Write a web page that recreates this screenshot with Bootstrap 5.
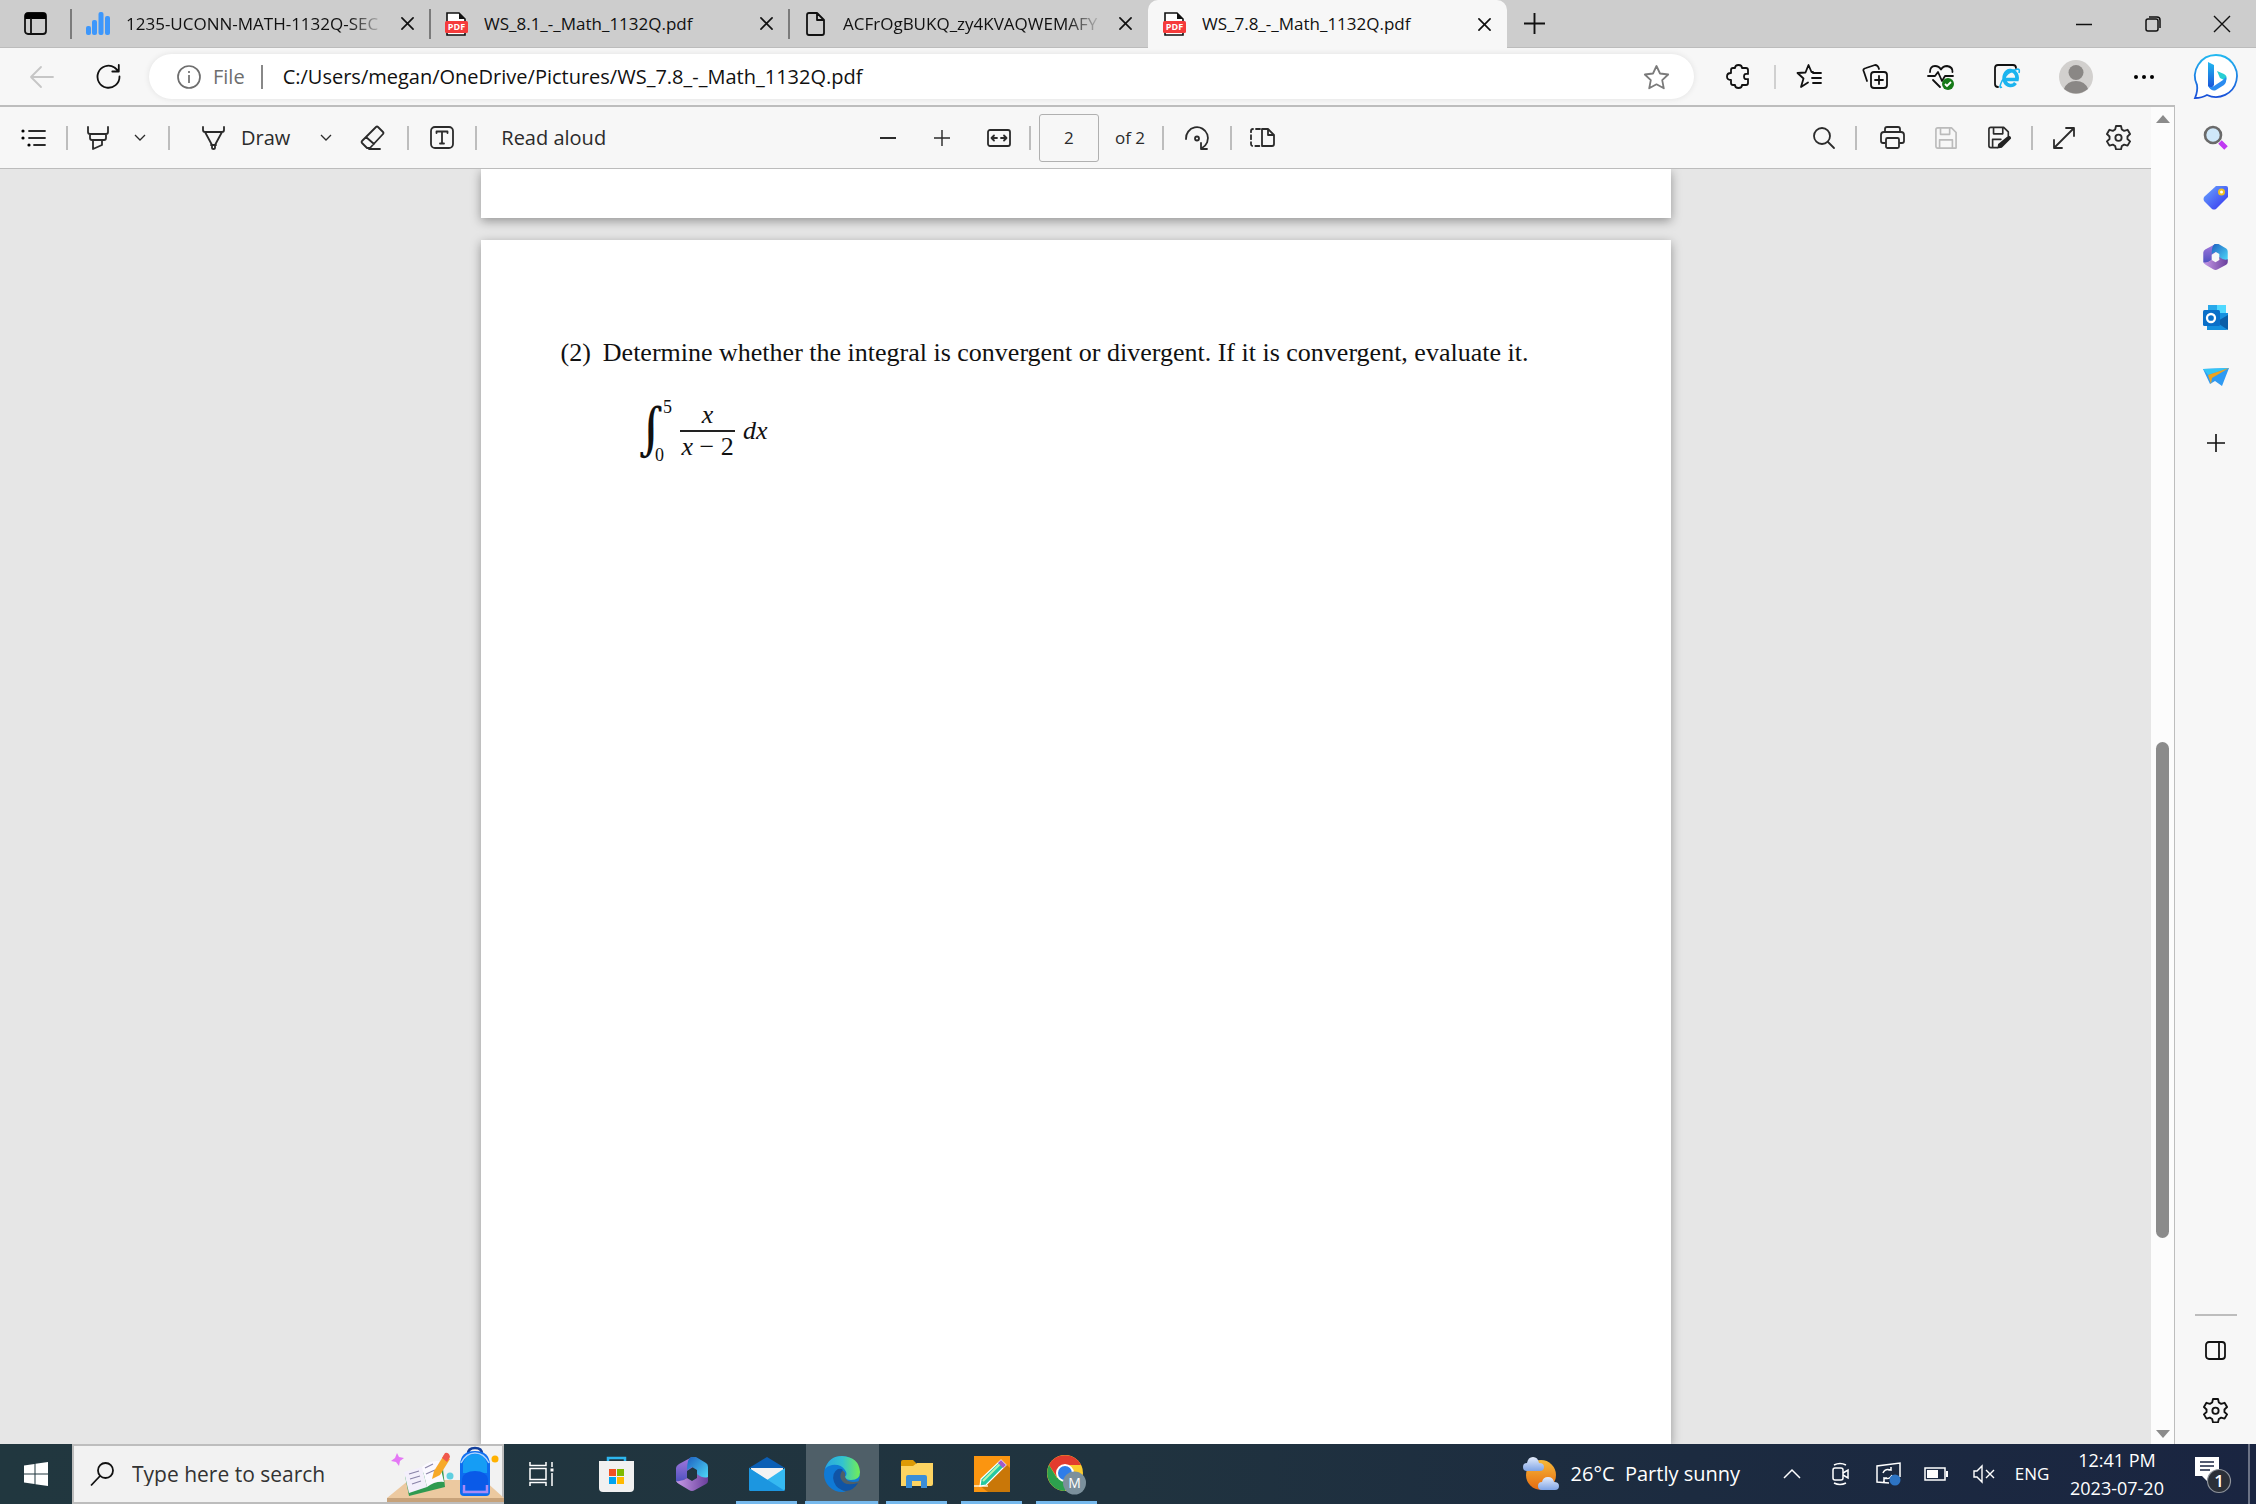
<!DOCTYPE html>
<html lang="en">
<head>
<meta charset="utf-8">
<meta name="viewport" content="width=device-width, initial-scale=1">
<title>WS_7.8_-_Math_1132Q.pdf</title>
<link rel="stylesheet" href="https://cdn.jsdelivr.net/npm/bootstrap@5.3.0/dist/css/bootstrap.min.css">
<script src="https://cdn.jsdelivr.net/npm/bootstrap@5.3.0/dist/js/bootstrap.bundle.min.js"></script>
<style>
body{font-family:"Open Sans","Noto Sans",sans-serif;font-size:17px;line-height:24px;color:#111;background:#f7f7f7}
svg{display:block;flex:none;overflow:visible}
.ln{fill:none;stroke:currentColor;stroke-width:1.8;stroke-linecap:round;stroke-linejoin:round}
.ib{border:0;background:none;padding:0;color:inherit;display:flex;align-items:center;justify-content:center;flex:none;align-self:stretch}
.w24{width:24px}.w54{width:54px}.w60{width:60px}.w63{width:63px}.w66{width:66px}.w69{width:69px}.w72{width:72px}.w75{width:75px}
.min-0{min-width:0;min-height:0}
.vbar{width:2px;height:24px;background:#bdbdbd;flex:none}
/* tab strip */
.tabstrip{height:48px;background:#cdcdcd;border-bottom:1px solid #bcbcbc}
.lead-btn{width:71px}
.tabitem{width:359px;padding:0 16px;gap:16px;min-width:0}
.tabitem+.tabitem::before,.tabitem.first::before{content:"";width:2px;height:30px;background:#7b7b7b;margin:0 -2px 0 -17px;flex:none}
.tabitem.active{background:#f7f7f7;border-radius:10px 10px 0 0;margin-bottom:-1px}
.tabitem.active::before{visibility:hidden}
.tabname{color:#111;text-decoration:none;white-space:nowrap;overflow:hidden;flex:1 1 0}
.fade-end{-webkit-mask-image:linear-gradient(90deg,#000 86%,transparent);mask-image:linear-gradient(90deg,#000 86%,transparent)}
/* address row */
.addr{height:57px}
.omni{height:45px;border-radius:23px;background:#fff;box-shadow:0 0 6px rgba(0,0,0,.09);padding:0 24px 0 28px;font-size:20px}
.omni label{color:#6e6e6e}
.omni input{border:0;outline:0;background:none;color:#111;padding:0}
/* viewer */
.viewer{border-top:2px solid #bdbdbd;border-right:1px solid #bdbdbd;min-height:0}
.pdfbar{height:62px;border-bottom:1px solid #bcbcbc;color:#2b2b2b;font-size:20px}
.third{flex:1 1 0}
.tools-mid{padding-left:8px}
.tools-end{padding-right:6px}
.pageno{width:60px;height:48px;border:1px solid #b0b0b0;border-radius:3px;background:none;text-align:center;font-size:17px;color:#2b2b2b;padding:0}
.pagecount{font-size:17px;padding:0 17px 0 16px}
.canvas{background:#e6e6e6;min-height:0;gap:22px}
.sheet{width:1190px;max-width:100%;background:#fff;box-shadow:0 3px 10px rgba(0,0,0,.36);flex:none}
.sheet.prev{height:49px}
.sheet.cur{flex:1 0 0;padding:97px 80px}
.doc{font-family:"Liberation Serif",serif;font-size:26px;line-height:32px;color:#111}
.formula{padding:30px 0 0 76px}
.intsign{font-family:"DejaVu Math TeX Gyre","Liberation Serif",serif;font-size:48px;line-height:60px}
.lims{font-size:18px;line-height:16px;height:64px;margin-left:-10px}
.lims .upper{padding-left:8px}
.fracbar{border-top:2px solid #222}
.frac{width:55px;line-height:22px}
.scroller{width:23px;background:#fcfcfc;padding:8px 0 6px}
.thumb{width:13px;border-radius:7px;background:#8b8b8b;flex:495 0 0}
.above{flex:619 0 0}.below{flex:192 0 0}
.side{width:81px;padding:6px 0 4px}
.side .ib{height:60px;align-self:center;width:60px}
.side .ib.bing{height:45px;margin-bottom:8px}
.side .ib.add{height:72px}
.side .rule{width:42px;height:2px;background:#bdbdbd}
/* taskbar */
.task{height:60px;background:linear-gradient(90deg,#21373f,#20333f 50%,#1c2b40 75%,#1a2541);color:#fff}
.find{width:432px;background:#f2f2f2;border:2px solid #bdbdbd;padding-left:16px}
.find input{border:0;outline:0;background:none;font-size:21px;flex:1 1 0;min-width:0;padding:0 0 0 2px;color:#333}
.find input::placeholder{color:#333;opacity:1}
.find svg:last-child{margin-right:-2px}
.run{position:relative}
.run::after{content:"";position:absolute;left:7px;right:7px;bottom:0;height:3px;background:#76b9ed}
.run.cur::after{left:1px;right:1px}
.run.cur{background:linear-gradient(#4f5f68,#4f5f68) 2px 0/73px no-repeat}
.weather{font-size:20px;gap:12px}
.tray .ib{width:48px}
.tray .ib.note{width:70px}
.clock{width:122px;font-size:18px;line-height:28px}
.showdesk{width:2px;background:#6c7386;margin-right:6px}
</style>
</head>
<body class="vh-100 d-flex flex-column overflow-hidden">
<svg width="0" height="0" class="position-absolute" aria-hidden="true">
<defs>
<linearGradient id="gb" x1="0" y1="0" x2="0" y2="1"><stop offset="0" stop-color="#22b8f0"/><stop offset="1" stop-color="#1a4fd8"/></linearGradient>
<linearGradient id="gt" x1="0" y1="0" x2="1" y2="1"><stop offset="0" stop-color="#6aa9ff"/><stop offset="1" stop-color="#3430ee"/></linearGradient>
<linearGradient id="gp" x1="0" y1="0" x2="0" y2="1"><stop offset="0" stop-color="#a678dc"/><stop offset="1" stop-color="#4a50c0"/></linearGradient>
<linearGradient id="gq" x1="0" y1="0" x2="1" y2="0"><stop offset="0" stop-color="#c79be8"/><stop offset="1" stop-color="#6a3f9c"/></linearGradient>
<linearGradient id="gc" x1="0" y1="0" x2="1" y2="1"><stop offset="0" stop-color="#1d5fc0"/><stop offset="1" stop-color="#4fdcfa"/></linearGradient>
<linearGradient id="ge" x1="0" y1="0" x2="1" y2="0"><stop offset="0" stop-color="#2aa6e0"/><stop offset=".5" stop-color="#33c3cf"/><stop offset="1" stop-color="#72ee55"/></linearGradient>
<linearGradient id="gs" x1="0" y1="0" x2="0" y2="1"><stop offset="0" stop-color="#f6b93a"/><stop offset="1" stop-color="#e56a10"/></linearGradient>
<linearGradient id="gk" x1="0" y1="0" x2="0" y2="1"><stop offset="0" stop-color="#e4ecfb"/><stop offset="1" stop-color="#7fa4e6"/></linearGradient>
</defs>
<symbol id="x" viewBox="0 0 14 14"><path class="ln" d="M1 1l12 12M13 1L1 13"/></symbol>
<symbol id="chev" viewBox="0 0 12 8"><path d="M1 1l5 5 5-5" fill="none" stroke="currentColor" stroke-width="1.3"/></symbol>
<symbol id="plus" viewBox="0 0 20 20"><path d="M10 0v20M0 10h20" fill="none" stroke="currentColor" stroke-width="1.8"/></symbol>
<symbol id="pdf" viewBox="0 0 23 24"><path d="M2 1h12l6 6v16H2z" fill="#fff" stroke="#111" stroke-width="1.6"/><path d="M14 1v6h6z" fill="#111"/><rect y="9" width="23" height="12" rx="1.5" fill="#f53b3b"/><text x="11.500" y="18" text-anchor="middle" font-family="Open Sans" font-weight="700" font-size="9" fill="#fff">PDF</text></symbol>
<symbol id="gear" viewBox="0 0 24 24"><path class="ln" d="M9.600 1h4.800l.8 3.300 2.200 1.300 3.300-1 2.400 4.100-2.500 2.300v2.400l2.500 2.300-2.400 4.100-3.300-1-2.200 1.300-.8 3.300H9.600l-.8-3.300-2.200-1.300-3.300 1L.9 15.700l2.500-2.300V11L.9 8.700l2.400-4.100 3.300 1 2.200-1.300z"/><circle class="ln" cx="12" cy="12.200" r="3"/></symbol>
<symbol id="m365" viewBox="0 0 32 34"><path d="M16 0L3 7Q0 9 0 11v13l3 2 8-5V14l6-4q3-6-1-10z" fill="url(#gp)"/><path d="M15 0q3-1 5 0l10 6q2 1 2 4v11q0 2-2 2-4 0-9-4v-6l-5-3-5 3q0-5 1-9 1-3 3-4z" fill="url(#gc)"/><path d="M32 20v4q0 2-2 3l-11 6q-3 2-6 0L3 27q-2-1-3-3 6 1 11-3l5 3 5-3v-4q6 5 11 3z" fill="url(#gq)"/></symbol>
<symbol id="floppy" viewBox="0 0 24 24"><path class="ln" d="M3 1h15l5 5v17H3q-2 0-2-2V3q0-2 2-2zM6 1v7h10V1M5 23v-9h14v9"/></symbol>
</svg>

<header class="tabstrip d-flex flex-shrink-0">
  <button class="ib lead-btn" aria-label="Tab actions"><svg width="23" height="23" viewBox="0 0 23 23"><rect class="ln" x="1" y="1" width="21" height="21" rx="3"/><path d="M1 3q0-2 2-2h17q2 0 2 2v4H1z"/><path class="ln" d="M7 7v15"/></svg></button>
  <nav class="d-flex">
    <div class="tabitem first d-flex align-items-center">
      <svg width="24" height="23" viewBox="0 0 24 23" fill="#3d97fb"><rect y="14" width="5" height="9" rx="2"/><rect x="6" y="8" width="5" height="15" rx="2"/><rect x="12.500" width="5" height="23" rx="2"/><rect x="19" y="4" width="5" height="19" rx="2"/></svg>
      <a href="#" class="tabname fade-end">1235-UCONN-MATH-1132Q-SEC</a>
      <button class="ib" aria-label="Close tab"><svg width="13" height="13"><use href="#x"/></svg></button>
    </div>
    <div class="tabitem d-flex align-items-center">
      <svg width="23" height="24"><use href="#pdf"/></svg>
      <a href="#" class="tabname">WS_8.1_-_Math_1132Q.pdf</a>
      <button class="ib" aria-label="Close tab"><svg width="13" height="13"><use href="#x"/></svg></button>
    </div>
    <div class="tabitem d-flex align-items-center">
      <svg width="23" height="24" viewBox="0 0 23 24"><path class="ln" d="M5 1h8l7 7v13q0 2-2 2H5q-2 0-2-2V3q0-2 2-2zM13 1v7h7" stroke-width="2"/></svg>
      <a href="#" class="tabname fade-end">ACFrOgBUKQ_zy4KVAQWEMAFY</a>
      <button class="ib" aria-label="Close tab"><svg width="13" height="13"><use href="#x"/></svg></button>
    </div>
    <div class="tabitem active d-flex align-items-center">
      <svg width="23" height="24"><use href="#pdf"/></svg>
      <a href="#" class="tabname">WS_7.8_-_Math_1132Q.pdf</a>
      <button class="ib" aria-label="Close tab"><svg width="13" height="13"><use href="#x"/></svg></button>
    </div>
  </nav>
  <button class="ib w54" aria-label="New tab"><svg width="21" height="21"><use href="#plus"/></svg></button>
  <div class="d-flex ms-auto">
    <button class="ib w69" aria-label="Minimize"><svg width="16" height="16" viewBox="0 0 16 16"><path d="M0 8.500h16" stroke="#111" stroke-width="1.500"/></svg></button>
    <button class="ib w69" aria-label="Restore"><svg width="16" height="16" viewBox="0 0 16 16" fill="none" stroke="#111" stroke-width="1.500"><rect x="1" y="3" width="12" height="12" rx="2"/><path d="M4 1h8q3 0 3 3v8"/></svg></button>
    <button class="ib w69" aria-label="Close"><svg width="16" height="16" viewBox="0 0 14 14"><path d="M0 0l14 14M14 0L0 14" stroke="#111" stroke-width="1.200"/></svg></button>
  </div>
</header>

<div class="d-flex flex-fill min-0">
  <main class="d-flex flex-column flex-fill min-0">
    <div class="addr d-flex align-items-center flex-shrink-0">
      <button class="ib w75 ps-2" aria-label="Back"><svg width="24" height="22" viewBox="0 0 24 22"><path class="ln" style="stroke:#c6c6c6" d="M23 11H1M11 1L1 11l10 10"/></svg></button>
      <button class="ib w66" aria-label="Refresh"><svg width="25" height="25" viewBox="0 0 25 25"><path class="ln" d="M23.500 12.500A11 11 0 1 1 18.500 3.500L22.500 7M22.800 1v6.500h-6.500" stroke-width="2"/></svg></button>
      <div class="omni d-flex align-items-center flex-fill ms-2">
        <svg width="24" height="24" viewBox="0 0 24 24" fill="none" stroke="#6e6e6e" stroke-width="1.700"><circle cx="12" cy="12" r="11"/><path d="M12 10v8M12 6v2"/></svg>
        <label for="url" class="ms-2 ps-1 text-nowrap">File</label>
        <span class="vbar mx-3" style="background:#888"></span>
        <input id="url" class="flex-fill ps-1" type="text" value="C:/Users/megan/OneDrive/Pictures/WS_7.8_-_Math_1132Q.pdf">
        <button class="ib" aria-label="Add to favorites"><svg width="27" height="26" viewBox="0 0 27 26"><path class="ln" style="stroke:#7b7b7b" d="M13.500 2l3.500 7.500 8.200 1-6 5.600 1.600 8.200-7.300-4-7.300 4 1.600-8.200-6-5.600 8.200-1z"/></svg></button>
      </div>
      <button class="ib w72 ms-2" aria-label="Extensions"><svg width="24" height="25" viewBox="0 0 24 25"><path class="ln" stroke-width="2" d="M7 4h2q0-3 3.500-3T16 4h4q2 0 2 2v4q-4-1-4 2.500T22 15v4q0 2-2 2h-4q0 3-3.500 3T9 21H7q-2 0-2-2v-3q-4 0-4-3.500T5 9V6q0-2 2-2z"/></svg></button>
      <span class="vbar" style="background:#d0d0d0"></span>
      <button class="ib w66" aria-label="Favorites"><svg width="26" height="25" viewBox="0 0 26 25"><path class="ln" stroke-width="2" d="M17 8h-1.500L12.500 1 9.500 8.500 1.500 9l6 5.500L5 23l7-4.500M17 9h8M16 14h9M17 19h8"/></svg></button>
      <button class="ib w66" aria-label="Collections"><svg width="26" height="25" viewBox="0 0 26 25"><rect class="ln" x="9" y="8" width="16" height="16" rx="3"/><path class="ln" d="M17 12v8M13 16h8M5 17L2 8Q0 5 4 4l9-3q3 0 4 4"/></svg></button>
      <button class="ib w66" aria-label="Browser essentials"><svg width="26" height="26" viewBox="0 0 26 26"><path class="ln" d="M0 12h7l3-4 4 9 3-5h8M2 8Q2 2 7 2q4 0 6 3.500Q15 2 19 2q6 1 5.500 6M5 16l7 7"/><circle cx="20" cy="20" r="6" fill="#157a18"/><path d="M17 20l2 2 4-4" fill="none" stroke="#fff" stroke-width="1.800"/></svg></button>
      <button class="ib w66" aria-label="Internet Explorer mode"><svg width="26" height="25" viewBox="0 0 26 25"><path class="ln" d="M4 23q-3 0-3-3V4q0-3 3-3h15q3 0 3 3"/><path d="M9 15.500h14A6.500 7.500 0 1 0 21.500 19" fill="none" stroke="#1cb4ef" stroke-width="3.600"/><path d="M8 23Q4 25 8 17 14 7 24 5q2 0 1 4" fill="none" stroke="#1cb4ef" stroke-width="1.600"/></svg></button>
      <button class="ib w72" aria-label="Profile"><svg width="34" height="34" viewBox="0 0 34 34"><circle cx="17" cy="17" r="17" fill="#d2d0ce"/><circle cx="17" cy="12.500" r="7.500" fill="#8a8785"/><path d="M5 29q3-8 12-8t12 8q-12 9-24 0" fill="#8a8785"/></svg></button>
      <button class="ib w63" aria-label="Settings and more"><svg width="20" height="4" viewBox="0 0 20 4"><circle cx="2" cy="2" r="2"/><circle cx="10" cy="2" r="2"/><circle cx="18" cy="2" r="2"/></svg></button>
    </div>

    <div class="viewer d-flex flex-fill">
      <section class="d-flex flex-column flex-fill min-0">
        <div class="pdfbar d-flex align-items-center flex-shrink-0">
          <div class="third d-flex align-items-center align-self-stretch">
            <button class="ib w66" aria-label="Contents"><svg width="25" height="18" viewBox="0 0 25 18"><path class="ln" stroke-width="2" d="M8 2h16M8 9h16M13 16h11"/><circle cx="2" cy="2" r="1.600"/><circle cx="2" cy="9" r="1.600"/><circle cx="8" cy="16" r="1.600"/></svg></button>
            <span class="vbar"></span>
            <button class="ib w60" aria-label="Highlight"><svg width="22" height="24" viewBox="0 0 22 24"><path class="ln" d="M1 1v5q0 2 2 2h16q2 0 2-2V1M3 8v4q0 2 2 2h12q2 0 2-2V8M6 14v9l9-4v-5"/></svg></button>
            <button class="ib w24" aria-label="Highlight options"><svg width="12" height="8"><use href="#chev"/></svg></button>
            <span class="vbar ms-3"></span>
            <button class="ib ms-4 ps-2"><svg width="23" height="24" viewBox="0 0 23 24"><path class="ln" d="M1 1v3q0 2 2 2h17q2 0 2-2V1M3 6l7 13v3q0 1 1.500 1t1.500-1v-3l7-13M9 19h5"/></svg><span class="ms-3">Draw</span></button>
            <button class="ib w24 ms-4" aria-label="Draw options"><svg width="12" height="8"><use href="#chev"/></svg></button>
            <button class="ib w69" aria-label="Erase"><svg width="25" height="25" viewBox="0 0 25 25"><path class="ln" d="M16 2q1-1 2 0l5 5q1 1 0 2L10 23H7l-5-5q-1-1 0-2zM6 12l8 7M9 24h11"/></svg></button>
            <span class="vbar"></span>
            <button class="ib w66" aria-label="Add text"><svg width="24" height="23" viewBox="0 0 24 23"><rect class="ln" x="1" y="1" width="22" height="21" rx="4"/><path class="ln" d="M6.500 7V5.500h11V7M12 5.500v12M10 17.500h4"/></svg></button>
            <span class="vbar"></span>
            <button class="ib ms-4">Read aloud</button>
          </div>
          <div class="tools-mid d-flex align-items-center align-self-stretch">
            <button class="ib w54" aria-label="Zoom out"><svg width="16" height="16" viewBox="0 0 16 16"><path d="M0 8h16" stroke="#2b2b2b" stroke-width="2"/></svg></button>
            <button class="ib w54" aria-label="Zoom in"><svg width="16" height="16"><use href="#plus"/></svg></button>
            <button class="ib w60" aria-label="Fit to width"><svg width="24" height="18" viewBox="0 0 24 18"><rect class="ln" x="1" y="1" width="22" height="16" rx="2"/><path class="ln" d="M10 9H5M7 6.500L4.500 9 7 11.500M14 9h5M17 6.500L19.500 9 17 11.500"/></svg></button>
            <span class="vbar"></span>
            <input class="pageno ms-2" type="text" value="2" aria-label="Page number">
            <span class="pagecount text-nowrap">of 2</span>
            <span class="vbar"></span>
            <button class="ib w66" aria-label="Rotate"><svg width="25" height="24" viewBox="0 0 25 24"><path class="ln" d="M1 13A11 11 0 1 1 17 22M16 17v6h6"/><circle class="ln" cx="12" cy="12.500" r="2"/></svg></button>
            <span class="vbar"></span>
            <button class="ib w60" aria-label="Page view"><svg width="25" height="19" viewBox="0 0 25 19"><path class="ln" d="M12 1h6l6 6v9q0 2-2 2H12zM18 1v6h6"/><path class="ln" stroke-dasharray="4 3" d="M10 1H3Q1 1 1 3v13q0 2 2 2h7"/></svg></button>
          </div>
          <div class="third tools-end d-flex align-items-center align-self-stretch justify-content-end">
            <button class="ib w54" aria-label="Find"><svg width="22" height="22" viewBox="0 0 22 22"><circle class="ln" cx="9" cy="9" r="8"/><path class="ln" d="M15 15l6 6"/></svg></button>
            <span class="vbar mx-1"></span>
            <button class="ib w54 ms-1" aria-label="Print"><svg width="25" height="23" viewBox="0 0 25 23"><path class="ln" d="M5 17H3q-2 0-2-2V9q0-3 3-3h17q3 0 3 3v6q0 2-2 2h-2M5 6V3q0-2 2-2h11q2 0 2 2v3"/><rect class="ln" x="6" y="12" width="13" height="10" rx="1.500"/></svg></button>
            <button class="ib w54" aria-label="Save" style="color:#bbb"><svg width="22" height="22"><use href="#floppy"/></svg></button>
            <button class="ib w54" aria-label="Save as"><svg width="24" height="23" viewBox="0 0 26 24"><path class="ln" d="M10 23H3q-2 0-2-2V3q0-2 2-2h14l5 5v4M6 1v7h10V1M5 23v-9h9"/><path d="M10 24l1-5 11-9q3 0 3 3l-10 10z" fill="#222"/></svg></button>
            <span class="vbar ms-1 me-1"></span>
            <button class="ib w54" aria-label="Full screen"><svg width="22" height="22" viewBox="0 0 22 22"><path class="ln" d="M1 21L21 1M13 1h8v8M1 13v8h8"/></svg></button>
            <button class="ib w54" aria-label="PDF settings"><svg width="25" height="25"><use href="#gear"/></svg></button>
          </div>
        </div>
        <div class="canvas d-flex flex-column align-items-center flex-fill overflow-hidden">
          <div class="sheet prev"></div>
          <article class="sheet cur doc">
            <div class="d-flex"><span>(2)</span><span class="ps-2 ms-1">Determine whether the integral is convergent or divergent. If it is convergent, evaluate it.</span></div>
            <div class="formula d-flex align-items-center">
              <span class="intsign">∫</span>
              <span class="lims d-flex flex-column justify-content-between"><span class="upper">5</span><span>0</span></span>
              <span class="frac d-flex flex-column text-center ms-2"><i class="pb-1">x</i><span class="fracbar pt-1"><i>x</i> − 2</span></span>
              <i class="ms-2">dx</i>
            </div>
          </article>
        </div>
      </section>
      <div class="scroller d-flex flex-column align-items-center flex-shrink-0" aria-hidden="true">
        <svg width="14" height="8" viewBox="0 0 14 8"><path d="M0 8l7-8 7 8z" fill="#8b8b8b"/></svg>
        <span class="above"></span><span class="thumb"></span><span class="below"></span>
        <svg width="14" height="8" viewBox="0 0 14 8"><path d="M0 0l7 8 7-8z" fill="#8b8b8b"/></svg>
      </div>
    </div>
  </main>

  <aside class="side d-flex flex-column align-items-center flex-shrink-0">
    <button class="ib bing" aria-label="Bing chat"><svg width="45" height="45" viewBox="0 0 45 45"><path d="M23 1a21 21 0 1 1-9 40q-5 3-12 3 3-7 2-13A21 21 0 0 1 23 1z" fill="#fff" stroke="url(#gb)" stroke-width="1.800"/><path d="M15 8l6 3v20l-3 4-3-3z" fill="url(#gb)"/><path d="M24 17l7 3q4 2 2 7l-6-3z" fill="#27cfd4"/><path d="M33 23q1 5-2 8l-8 5q-4 2-8-4 3 2 6 0l9-6z" fill="#2b8cf0"/></svg></button>
    <button class="ib" aria-label="Search"><svg width="25" height="25" viewBox="0 0 25 25"><path d="M17 17l6 6" stroke="#c03af2" stroke-width="5"/><circle cx="10" cy="10" r="8" fill="#cfe8fa" stroke="#6a6a6a" stroke-width="2.600"/></svg></button>
    <button class="ib" aria-label="Shopping"><svg width="25" height="25" viewBox="0 0 25 25"><path d="M13 1h10q2 0 2 2v9L13 24q-2 1-4 0L1 16q-1-2 0-4z" fill="url(#gt)"/><circle cx="18.500" cy="7" r="2.500" fill="#fff" stroke="#f0c020" stroke-width="2"/></svg></button>
    <button class="ib" aria-label="Microsoft 365"><svg width="25" height="26"><use href="#m365"/></svg></button>
    <button class="ib" aria-label="Outlook"><svg width="25" height="25" viewBox="0 0 25 25"><path d="M5 0h18v8H5z" fill="#28a8ea"/><path d="M14 0h9v8h-9z" fill="#50d9ff"/><path d="M4 8h21v15q0 2-2 2H4z" fill="#1490df"/><path d="M25 10v15L13 17z" fill="#0a5ea8"/><rect y="5" width="17" height="16" rx="1.500" fill="#0a6fc8"/><circle cx="8" cy="13" r="4" fill="none" stroke="#fff" stroke-width="2.300"/></svg></button>
    <button class="ib" aria-label="Drop"><svg width="26" height="20" viewBox="0 0 26 20"><path d="M0 2l26-1-7 18-7-5-5 3z" fill="#2f9af2"/><path d="M0 2l26-1L5 8z" fill="#35c5f5"/><path d="M26 1L5 8l3 9 1-6z" fill="#eea31e"/></svg></button>
    <button class="ib add" aria-label="Customize"><svg width="18" height="18"><use href="#plus"/></svg></button>
    <span class="rule mt-auto"></span>
    <button class="ib mt-1" aria-label="Toggle sidebar"><svg width="21" height="19" viewBox="0 0 21 19"><rect class="ln" x="1" y="1" width="19" height="17" rx="3"/><path class="ln" d="M14 1v17"/></svg></button>
    <button class="ib" aria-label="Settings"><svg width="25" height="25"><use href="#gear"/></svg></button>
  </aside>
</div>

<footer class="task d-flex flex-shrink-0">
  <button class="ib w72" aria-label="Start"><svg width="24" height="24" viewBox="0 0 24 24" fill="#fff"><path d="M0 3.500L10.500 2v9.500H0zM11.500 1.800L24 0v11.500H11.500zM0 12.500h10.500V22L0 20.500zM11.500 12.500H24V24l-12.500-1.800z"/></svg></button>
  <div class="find d-flex align-items-center flex-shrink-0">
    <svg width="24" height="24" viewBox="0 0 24 24"><circle cx="15.500" cy="8.500" r="7.500" fill="none" stroke="#111" stroke-width="1.800"/><path d="M10 14L1 23.500" stroke="#111" stroke-width="1.800"/></svg>
    <input class="ms-3" type="search" placeholder="Type here to search" aria-label="Search">
    <svg class="align-self-end" width="117" height="56" viewBox="0 0 117 56">
      <path d="M0 52l22-18h75l20 18z" fill="#ecc9a0"/><path d="M0 52h117v4H0z" fill="#c7a27a"/>
      <path d="M10 7l2 4 5 1-4 3-1 5-3-4-5-1 4-3z" fill="#e477f5"/>
      <path d="M18 30l4 20 36-9-2-18z" fill="#2f9a50"/><path d="M17 26l18-5 5 20-18 6z" fill="#f3effb"/><path d="M35 21q8-7 17-6l5 21q-9-1-17 5z" fill="#fbf9ff"/><path d="M22 28l10-3M23 33l10-3M25 38l9-3M38 22l8-4M39 28l9-4" stroke="#8a84a8" stroke-width="1.200"/>
      <path d="M45 33l2-8L57 9l6 4-10 16z" fill="#f7a928"/><path d="M55 12l3-5q4-1 5 4l-3 5z" fill="#f0584c"/>
      <circle cx="63" cy="30" r="3.500" fill="#5fcfe0"/><circle cx="108" cy="13" r="3.500" fill="#ffb100"/>
      <path d="M81 8q0-6 7-6t7 6" fill="none" stroke="#123f9c" stroke-width="2.500"/><path d="M73 46V18Q74 5 88 5t15 13v28q0 4-4 4H77q-4 0-4-4z" fill="#0d6df0"/><path d="M76 17Q79 8 88 8t12 9v10H76z" fill="#159df5"/><path d="M75 44V33q2-8 13-8t13 8v11z" fill="#0a5ae8"/><path d="M77 39v7h23v-7" fill="none" stroke="#a98bf7" stroke-width="2.500"/><path d="M74 17Q79 7 88 7t14 10" fill="none" stroke="#a8d4ff" stroke-width="1.500"/>
    </svg>
  </div>
  <button class="ib w75" aria-label="Task view"><svg width="25" height="24" viewBox="0 0 25 24" fill="none" stroke="#fff" stroke-width="1.500"><path d="M1 0v3.500h16V0M1 24v-3.500h16V24M1 6.500h16v11H1zM23 0v5M23 11v13"/><path d="M21.500 8h3" stroke-width="3"/></svg></button>
  <button class="ib w75" aria-label="Microsoft Store"><svg width="35" height="36" viewBox="0 0 35 36"><path d="M9 7V2h17v5" fill="none" stroke="#2db7ef" stroke-width="2.500"/><path d="M0 5h35v27q0 4-4 4H4q-4 0-4-4z" fill="#f1f1f1"/><path d="M10 13h7v7h-7z" fill="#f25022"/><path d="M18 13h7v7h-7z" fill="#7fba00"/><path d="M10 21h7v7h-7z" fill="#00a4ef"/><path d="M18 21h7v7h-7z" fill="#ffb900"/></svg></button>
  <button class="ib w75" aria-label="Microsoft 365"><svg width="32" height="34"><use href="#m365"/></svg></button>
  <button class="ib w75 run" aria-label="Mail"><svg width="36" height="34" viewBox="0 0 36 34"><path d="M0 11L18 0l18 11z" fill="#0b5fb5"/><path d="M2 11h32v14H2z" fill="#f3f3f3"/><path d="M0 11l18 12L36 11v21q0 2-2 2H2q-2 0-2-2z" fill="#35b9f1"/><path d="M0 11l36 23H2q-2 0-2-2z" fill="#1c96e0"/></svg></button>
  <button class="ib w75 run cur" aria-label="Edge"><svg width="36" height="36" viewBox="0 0 36 36"><circle cx="18" cy="18" r="18" fill="#0f7ad6"/><path d="M1 13Q5 0 18 0q17 1 18 16 0 8-9 8-5 0-6-3 3-3 0-7-4-6-13-5-5 1-7 4z" fill="url(#ge)"/><path d="M13 14q5-1 8 3v4q2 7 15 4v11H22Q9 31 13 14z" fill="#4f5f68"/><path d="M14 13Q7 17 10 26q3 8 12 9 8-1 12-8-14 4-17-4-2-5 2-9-2-2-5-1z" fill="#1054a5"/></svg></button>
  <button class="ib w75 run" aria-label="File Explorer"><svg width="32" height="28" viewBox="0 0 32 28"><path d="M0 2q0-2 2-2h10l3 3v5H0z" fill="#dd9a06"/><path d="M0 6h12l4-3h16v21q0 2-2 2H0z" fill="#fdd462"/><path d="M5 28V17q0-2 2-2h17q2 0 2 2v11h-6v-7h-9v7z" fill="#3b8ed8"/></svg></button>
  <button class="ib w75 run" aria-label="Whiteboard"><svg width="36" height="36" viewBox="0 0 36 36"><path d="M0 0h36v36H0z" fill="#fb9510"/><path d="M32 8l4 4v24H14L6 30z" fill="#c97708"/><path d="M0 30h14" stroke="#fff2d0" stroke-width="1.500"/><path d="M7 23L27 4l5 5-20 20-6 1z" fill="#25c9a0" stroke="#fff" stroke-width="1.200"/><path d="M9 25L26 8" stroke="#b6f5b0" stroke-width="2"/><path d="M24 7l3-3 5 5-3 3z" fill="#a45ac8"/></svg></button>
  <button class="ib w75 run" aria-label="Chrome"><svg width="39" height="39" viewBox="0 0 39 39"><circle cx="18" cy="18" r="18" fill="#fccb2e"/><path d="M2 10A18 18 0 0 1 34 10H18L10 22z" fill="#e33b2e"/><path d="M2 10A18 18 0 0 0 18 36l7-14-15 1z" fill="#2da04e"/><circle cx="18" cy="18" r="8" fill="#2f7de9" stroke="#fff" stroke-width="2"/><circle cx="27.500" cy="28" r="11.500" fill="#7b909c"/><text x="27.500" y="33" text-anchor="middle" font-size="14" font-family="Open Sans" fill="#fff">M</text></svg></button>

  <div class="tray d-flex align-items-center ms-auto">
    <button class="ib weather w-auto me-4 pe-1"><svg width="36" height="34" viewBox="0 0 36 34"><ellipse cx="18" cy="18" rx="15" ry="15" fill="url(#gs)"/><path d="M4 14q-4 0-4-4t4-4q1-6 6-6t6 6q5 0 5 4t-4 4z" fill="url(#gk)"/><path d="M19 33q-4 0-4-4t4-4q1-5 6-5t6 5q5 0 5 4t-4 4z" fill="url(#gk)"/></svg><span>26°C&nbsp; Partly sunny</span></button>
    <button class="ib" aria-label="Show hidden icons"><svg width="18" height="10" viewBox="0 0 18 10"><path d="M1 9l8-8 8 8" fill="none" stroke="#fff" stroke-width="1.500"/></svg></button>
    <button class="ib" aria-label="Meet now"><svg width="17" height="22" viewBox="0 0 17 22" fill="none" stroke="#fff" stroke-width="1.500"><rect x="1" y="5" width="10" height="12" rx="2"/><path d="M11 10l5-3v8l-5-3M2 2q6-3 12 0M2 20q6 3 12 0"/></svg></button>
    <button class="ib" aria-label="Update"><svg width="25" height="24" viewBox="0 0 25 24" fill="none" stroke="#fff" stroke-width="1.500"><path d="M13 21L1 20V4l23-3v14M7 11q2-5 8-3V5M15 8h-3M16 13q-2 5-8 3v4M8 16h3"/><circle cx="19" cy="18" r="5.500" fill="#2d74c4" stroke="none"/></svg></button>
    <button class="ib" aria-label="Battery"><svg width="24" height="14" viewBox="0 0 24 14"><rect x="1" y="1" width="20" height="12" fill="none" stroke="#fff" stroke-width="1.500"/><path d="M3 3h11v8H3zM22 4h2v6h-2z" fill="#fff"/></svg></button>
    <button class="ib" aria-label="Muted"><svg width="22" height="18" viewBox="0 0 22 18" fill="none" stroke="#fff" stroke-width="1.400"><path d="M1 6h3l5-5v16l-5-5H1zM13 5l8 8M21 5l-8 8"/></svg></button>
    <button class="ib">ENG</button>
    <div class="clock text-center"><div>12:41 PM</div><div>2023-07-20</div></div>
    <button class="ib note" aria-label="Notifications"><svg width="37" height="37" viewBox="0 0 37 37"><path d="M0 1h24v19H14l-1 6-6-6H0z" fill="#fff"/><path d="M5 6h14M5 10h14M5 14h10" stroke="#1a2541" stroke-width="1.300"/><circle cx="24" cy="25" r="11.500" fill="#2b3038" stroke="#8f949c" stroke-width="1.200"/><text x="24" y="31" text-anchor="middle" font-size="17" font-weight="600" font-family="Open Sans" fill="#fff">1</text></svg></button>
    <span class="showdesk align-self-stretch"></span>
  </div>
</footer>
</body>
</html>
